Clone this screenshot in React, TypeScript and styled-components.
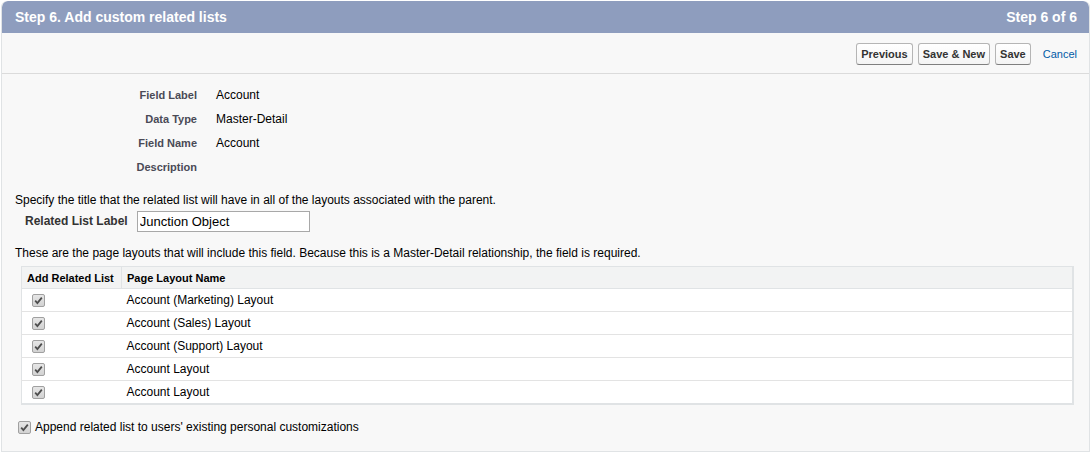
import React from 'react';
import styled, { createGlobalStyle } from 'styled-components';

const GlobalStyle = createGlobalStyle`
  html, body {
    margin: 0;
    padding: 0;
    background: #ffffff;
  }
  body {
    font-family: "Liberation Sans", Arial, sans-serif;
    font-size: 12px;
    color: #000;
  }
`;

const Page = styled.div`
  margin: 1px 1px 0 1px;
  width: 1089px;
  height: 451px;
  box-sizing: border-box;
  border: 1px solid #e0e3e5;
  border-top: none;
  border-radius: 6px 6px 0 0;
  background: #f8f8f8;
  display: flex;
  flex-direction: column;
  overflow: hidden;
`;

const Header = styled.div`
  height: 32px;
  background: #8e9dbe;
  border-radius: 6px 6px 0 0;
  display: flex;
  align-items: center;
  justify-content: space-between;
  padding: 0 12px 0 13px;
  color: #fff;
  font-weight: bold;
  font-size: 14px;
`;

const ButtonBar = styled.div`
  height: 41px;
  box-sizing: border-box;
  border-bottom: 1px solid #dbdbdb;
  display: flex;
  align-items: center;
  justify-content: flex-end;
  padding: 2px 12px 0 0;
  gap: 5px;
`;

const Button = styled.button`
  font-family: "Liberation Sans", Arial, sans-serif;
  font-size: 11px;
  font-weight: bold;
  color: #333;
  height: 22px;
  padding: 0 4px;
  border: 1px solid #b5b5b5;
  border-bottom-color: #7f7f7f;
  border-radius: 3px;
  background: linear-gradient(#ffffff, #f4f4f4);
  margin: 0;
`;

const CancelLink = styled.a`
  color: #015ba7;
  font-size: 11px;
  margin-left: 7px;
  text-decoration: none;
`;

const Body = styled.div`
  flex: 1;
  padding: 13px 0 0 13px;
`;

const DetailGrid = styled.div`
  display: grid;
  grid-template-columns: 182px auto;
  column-gap: 19px;
  margin-bottom: 10px;
`;

const DetailLabel = styled.div`
  font-size: 11px;
  font-weight: bold;
  color: #4a4a56;
  text-align: right;
  height: 24px;
  line-height: 16px;
`;

const DetailValue = styled.div`
  font-size: 12px;
  height: 24px;
  line-height: 16px;
`;

const Hint = styled.div<{ $gap?: number }>`
  font-size: 12px;
  color: #000;
  line-height: 14px;
  margin-top: ${(p) => p.$gap ?? 0}px;
`;

const LabelRow = styled.div`
  display: flex;
  align-items: center;
  margin: 0 0 0 10px;
  height: 28px;
`;

const InlineLabel = styled.label`
  font-size: 12px;
  font-weight: bold;
  color: #333;
  margin-right: 9px;
`;

const TextInput = styled.input`
  font-family: "Liberation Sans", Arial, sans-serif;
  font-size: 13px;
  width: 173px;
  height: 21px;
  box-sizing: border-box;
  border: 1px solid #a8a8a8;
  padding: 0 2px;
  background: #fff;
  color: #000;
`;

const Table = styled.table`
  margin: 6px 0 0 6px;
  width: 1053px;
  border-collapse: collapse;
  background: #fff;
  border: 1px solid #e0e3e5;
  border-right-width: 2px;
  border-bottom-width: 2px;
`;

const HeadCell = styled.th<{ $narrow?: boolean }>`
  background: #f2f3f3;
  font-size: 11px;
  font-weight: bold;
  color: #000;
  text-align: left;
  height: 21px;
  padding: 0 5px;
  border-bottom: 1px solid #e0e3e5;
  border-right: ${(p) => (p.$narrow ? '1px solid #e0e3e5' : 'none')};
  width: ${(p) => (p.$narrow ? '89px' : 'auto')};
  white-space: nowrap;
`;

const Cell = styled.td`
  font-size: 12px;
  height: 22px;
  padding: 0 5px;
  border-bottom: 1px solid #e3e3e3;
  line-height: 14px;
`;

const CheckCell = styled(Cell)`
  padding-left: 10px;
  line-height: 0;
`;

const Box = styled.span`
  display: inline-flex;
  align-items: center;
  justify-content: center;
  width: 11px;
  height: 11px;
  border: 1px solid #a0a0a0;
  border-radius: 2px;
  background: linear-gradient(#e6e6e6, #d2d2d2);
  vertical-align: middle;
`;

const AppendRow = styled.label`
  display: flex;
  align-items: center;
  gap: 4px;
  margin: 15px 0 0 3px;
  font-size: 12px;
`;

function CheckBox() {
  return (
    <Box>
      <svg width="9" height="9" viewBox="0 0 9 9">
        <path d="M1.2 4.6 L3.4 7 L7.8 1.6" fill="none" stroke="#4d4d4d" strokeWidth="1.8" />
      </svg>
    </Box>
  );
}

const layouts = [
  'Account (Marketing) Layout',
  'Account (Sales) Layout',
  'Account (Support) Layout',
  'Account Layout',
  'Account Layout',
];

const details: [string, string][] = [
  ['Field Label', 'Account'],
  ['Data Type', 'Master-Detail'],
  ['Field Name', 'Account'],
  ['Description', ''],
];

export default function App() {
  return (
    <>
      <GlobalStyle />
      <Page>
        <Header>
          <span>Step 6. Add custom related lists</span>
          <span>Step 6 of 6</span>
        </Header>
        <ButtonBar>
          <Button>Previous</Button>
          <Button>Save &amp; New</Button>
          <Button>Save</Button>
          <CancelLink href="#">Cancel</CancelLink>
        </ButtonBar>
        <Body>
          <DetailGrid>
            {details.map(([label, value]) => (
              <React.Fragment key={label}>
                <DetailLabel>{label}</DetailLabel>
                <DetailValue>{value}</DetailValue>
              </React.Fragment>
            ))}
          </DetailGrid>
          <Hint>Specify the title that the related list will have in all of the layouts associated with the parent.</Hint>
          <LabelRow>
            <InlineLabel>Related List Label</InlineLabel>
            <TextInput defaultValue="Junction Object" />
          </LabelRow>
          <Hint $gap={11}>
            These are the page layouts that will include this field. Because this is a Master-Detail relationship, the field is required.
          </Hint>
          <Table>
            <thead>
              <tr>
                <HeadCell $narrow>Add Related List</HeadCell>
                <HeadCell>Page Layout Name</HeadCell>
              </tr>
            </thead>
            <tbody>
              {layouts.map((name, i) => (
                <tr key={i}>
                  <CheckCell>
                    <CheckBox />
                  </CheckCell>
                  <Cell>{name}</Cell>
                </tr>
              ))}
            </tbody>
          </Table>
          <AppendRow>
            <CheckBox />
            Append related list to users' existing personal customizations
          </AppendRow>
        </Body>
      </Page>
    </>
  );
}
